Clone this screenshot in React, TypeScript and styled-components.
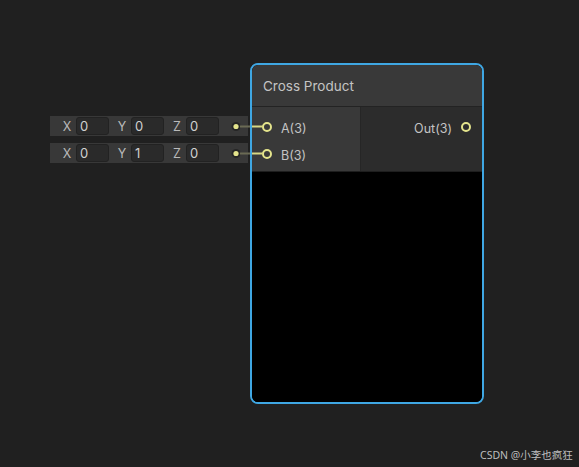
import React from "react";
import styled, { createGlobalStyle } from "styled-components";

const Global = createGlobalStyle`
  html, body { margin: 0; padding: 0; background: #202020; }
  body { font-family: Inter, "Noto Sans", "Liberation Sans", sans-serif; }
`;

const Canvas = styled.div`
  position: relative;
  width: 579px;
  height: 467px;
  background: #202020;
  overflow: hidden;
`;

const Node = styled.div`
  position: absolute;
  left: 250px;
  top: 63px;
  width: 234px;
  height: 341px;
  box-sizing: border-box;
  border: 2px solid #3fa7e3;
  border-radius: 8px;
  background: #000;
  display: flex;
  flex-direction: column;
  overflow: hidden;
`;

const Title = styled.div`
  height: 42px;
  flex: none;
  background: #393939;
  border-bottom: 1px solid #232323;
  display: flex;
  align-items: center;
  padding: 1px 11px 0;
  box-sizing: border-box;
  color: #c4c4c4;
  font-size: 13.5px;
`;

const Ports = styled.div`
  flex: none;
  height: 64px;
  display: flex;
  border-bottom: 1px solid #1e1e1e;
`;

const Column = styled.div<{ $side: "in" | "out" }>`
  display: flex;
  flex-direction: column;
  padding-top: 6px;
  box-sizing: border-box;
  background: ${(p) => (p.$side === "in" ? "#393939" : "#2c2c2c")};
  width: ${(p) => (p.$side === "in" ? "108px" : "auto")};
  flex: ${(p) => (p.$side === "in" ? "none" : "1")};
  border-left: ${(p) => (p.$side === "out" ? "1px solid #262626" : "none")};
  align-items: ${(p) => (p.$side === "in" ? "flex-start" : "flex-end")};
`;

const PortRow = styled.div<{ $side: "in" | "out" }>`
  height: 27px;
  display: flex;
  align-items: center;
  gap: 9px;
  flex-direction: ${(p) => (p.$side === "in" ? "row" : "row-reverse")};
  padding: ${(p) => (p.$side === "in" ? "0 0 0 10px" : "0 11px 0 0")};
  color: #c4c4c4;
  font-size: 12.5px;
  & > span:last-child { padding-top: 3px; }
`;

const Port = styled.span`
  width: 10px;
  height: 10px;
  box-sizing: border-box;
  border: 2px solid #e4e48c;
  border-radius: 50%;
  flex: none;
`;

const Preview = styled.div`
  flex: 1;
  background: #000;
`;

const Inline = styled.div<{ $top: number }>`
  position: absolute;
  left: 50px;
  top: ${(p) => p.$top}px;
  width: 198px;
  height: 20px;
  background: #383838;
  display: flex;
  align-items: center;
  box-sizing: border-box;
  padding-left: 8px;
`;

const Axis = styled.span`
  width: 18px;
  text-align: center;
  color: #bababa;
  font-size: 12.5px;
`;

const Field = styled.span`
  width: 33px;
  height: 18px;
  box-sizing: border-box;
  background: #2a2a2a;
  border: 1px solid #222;
  border-radius: 3px;
  color: #d0d0d0;
  font-size: 13px;
  display: flex;
  align-items: center;
  padding-left: 3px;
  margin-right: 4px;
`;

const Wires = styled.svg`
  position: absolute;
  left: 0;
  top: 0;
  pointer-events: none;
`;

const Watermark = styled.div`
  position: absolute;
  left: 480px;
  bottom: 5px;
  color: #bdbdbd;
  font-size: 10.5px;
  font-family: "Noto Sans", "Noto Sans CJK SC", sans-serif;
`;

const rows = [
  { top: 116, values: ["0", "0", "0"], y: 126.5 },
  { top: 143, values: ["0", "1", "0"], y: 153.5 },
];

export default function App() {
  return (
    <Canvas>
      <Global />
      {rows.map((r, i) => (
        <Inline key={i} $top={r.top}>
          <Axis>X</Axis>
          <Field>{r.values[0]}</Field>
          <Axis>Y</Axis>
          <Field>{r.values[1]}</Field>
          <Axis>Z</Axis>
          <Field>{r.values[2]}</Field>
        </Inline>
      ))}
      <Node>
        <Title>Cross Product</Title>
        <Ports>
          <Column $side="in">
            <PortRow $side="in">
              <Port />
              <span>A(3)</span>
            </PortRow>
            <PortRow $side="in">
              <Port />
              <span>B(3)</span>
            </PortRow>
          </Column>
          <Column $side="out">
            <PortRow $side="out">
              <Port />
              <span>Out(3)</span>
            </PortRow>
          </Column>
        </Ports>
        <Preview />
      </Node>
      <Wires width="579" height="467">
        {rows.map((r, i) => (
          <g key={i}>
            <circle cx="236" cy={r.y} r="4.5" fill="#262626" />
            <circle cx="236" cy={r.y} r="2.6" fill="#e4e48c" />
            <line x1="240" y1={r.y} x2="250" y2={r.y} stroke="#6a6a54" strokeWidth="2" />
            <line x1="252" y1={r.y} x2="263" y2={r.y} stroke="#d8d884" strokeWidth="2" />
          </g>
        ))}
      </Wires>
      <Watermark>CSDN @小李也疯狂</Watermark>
    </Canvas>
  );
}
